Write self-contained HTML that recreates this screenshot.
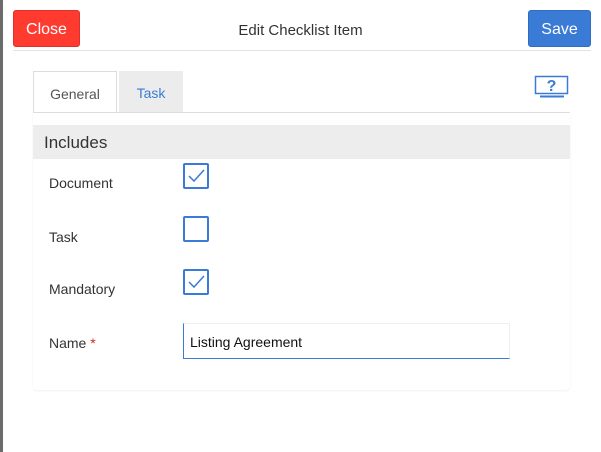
<!DOCTYPE html>
<html><head><style>
*{box-sizing:border-box;margin:0;padding:0}
body{width:601px;height:452px;background:#fff;font-family:"Liberation Sans",sans-serif;position:relative;overflow:hidden}
.strip{position:absolute;left:0;top:0;width:3px;height:452px;background:#6b6b6b}
.btn{position:absolute;top:10px;height:37px;color:#fff;font-size:16px;line-height:37px;text-align:center;border-radius:3px}
.close{left:13px;width:67px;background:#ff3b30;border:1px solid #e0302a}
.save{left:528px;width:63px;background:#3a7bd5;border:1px solid #2f6cc4}
.title{position:absolute;top:22px;left:0;width:601px;text-align:center;font-size:15px;color:#333}
.hline{position:absolute;left:13px;top:50px;width:578px;height:1px;background:#e2e2e2}
.tab{position:absolute;top:71px;height:42px;font-size:14px;line-height:44px;text-align:center}
.t1{left:33px;width:84px;border:1px solid #ddd;border-bottom:none;color:#555;background:#fff}
.t2{left:119px;width:64px;background:#ececec;color:#3a7bd5}
.tabline{position:absolute;left:33px;top:112px;width:537px;height:1px;background:#ddd}
.card{position:absolute;left:33px;top:113px;width:537px;height:277px;background:#fff;box-shadow:0 1px 2px rgba(0,0,0,.06);border-radius:0 0 4px 4px}
.inc{position:absolute;left:33px;top:125px;width:537px;height:34px;background:#ededed;font-size:17px;color:#333;line-height:36px;padding-left:11px}
.lbl{position:absolute;left:49px;font-size:14px;color:#333}
.cb{position:absolute;left:183px;width:26px;height:26px;border:2px solid #3a7bd5;border-radius:2px}
.input{position:absolute;left:183px;top:323px;width:327px;height:36px;border:1px solid #eee;border-left:1px solid #3a7bd5;border-bottom:1px solid #3a7bd5;font-size:14px;color:#111;line-height:36px;padding-left:6px}
</style></head><body>
<div class="strip"></div>
<div class="btn close">Close</div>
<div class="title">Edit Checklist Item</div>
<div class="btn save">Save</div>
<div class="hline"></div>
<div class="card"></div>
<div class="tab t1">General</div>
<div class="tab t2">Task</div>
<div class="tabline"></div>
<svg style="position:absolute;left:534px;top:75px" width="36" height="24"><rect x="1.5" y="1.5" width="32" height="17" fill="none" stroke="#3a7bd5" stroke-width="1.5"/><line x1="6" y1="21.5" x2="30" y2="21.5" stroke="#3a7bd5" stroke-width="2"/><text x="17.5" y="16" font-size="16" font-weight="bold" text-anchor="middle" fill="#3a7bd5" font-family="Liberation Sans">?</text></svg>
<div class="inc">Includes</div>
<div class="lbl" style="top:175px">Document</div>
<div class="cb" style="top:163px"><svg width="22" height="22" style="position:absolute;left:0;top:0"><path d="M4 11 L9 16 L19 5" fill="none" stroke="#3a7bd5" stroke-width="1.5"/></svg></div>
<div class="lbl" style="top:229px">Task</div>
<div class="cb" style="top:216px"></div>
<div class="lbl" style="top:281px">Mandatory</div>
<div class="cb" style="top:269px"><svg width="22" height="22" style="position:absolute;left:0;top:0"><path d="M4 11 L9 16 L19 5" fill="none" stroke="#3a7bd5" stroke-width="1.5"/></svg></div>
<div class="lbl" style="top:335px">Name <span style="color:#e02020">*</span></div>
<div class="input">Listing Agreement</div>
</body></html>
